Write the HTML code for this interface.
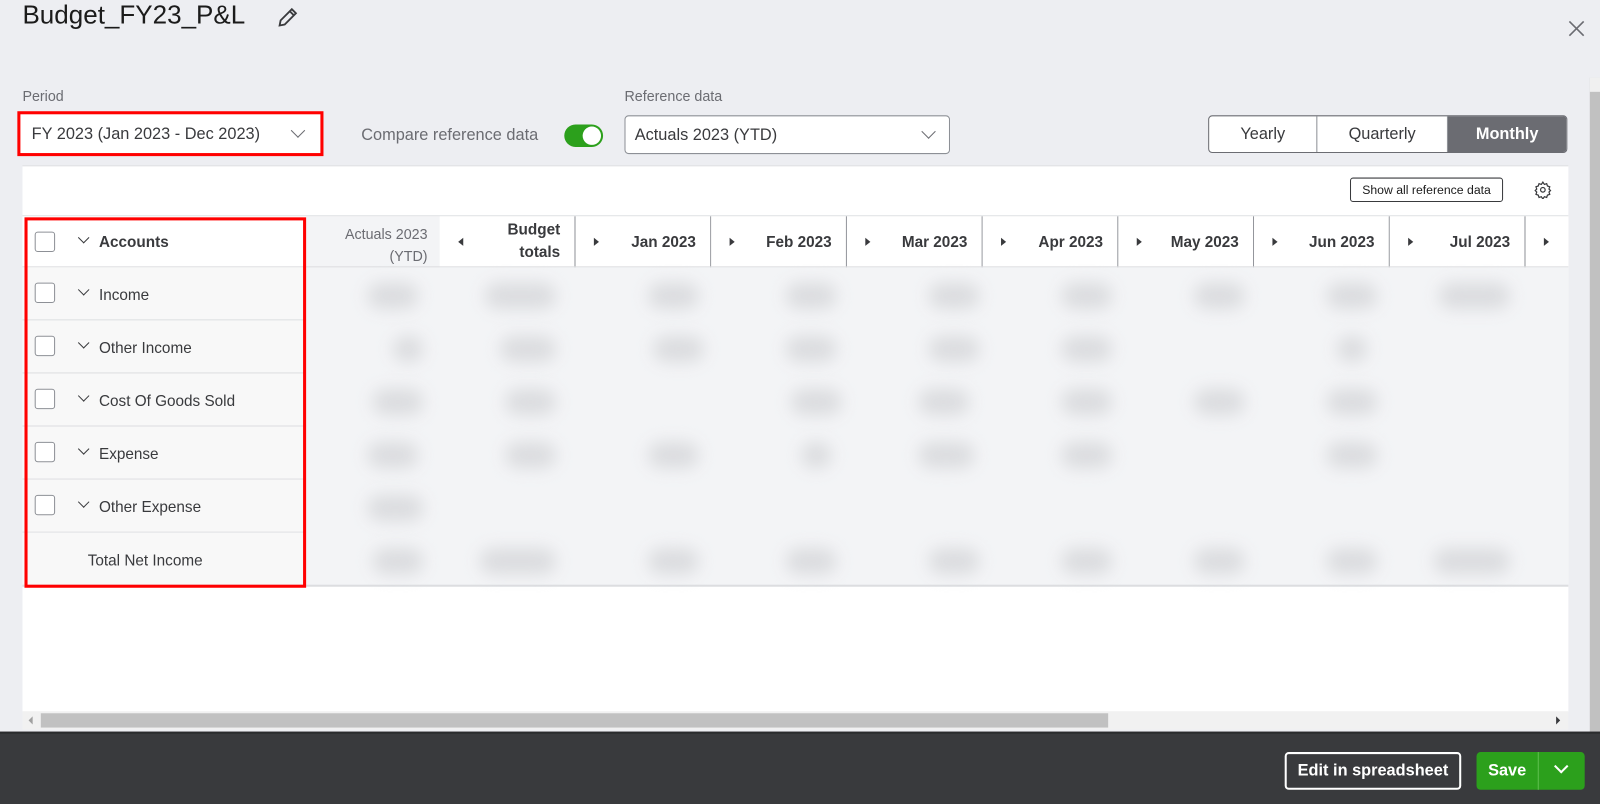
<!DOCTYPE html>
<html><head><meta charset="utf-8"><style>
*{box-sizing:border-box;margin:0;padding:0}
html,body{width:1600px;height:804px;overflow:hidden;background:#edeef2;font-family:"Liberation Sans",sans-serif;color:#393a3d}
#w{position:absolute;left:0;top:0;width:1568px;height:788px;transform:scale(1.020408);transform-origin:0 0;background:#edeef2}
.a{position:absolute}
.t{white-space:nowrap}
.hd{position:absolute;top:212px;height:50px;font-size:15px;font-weight:bold;color:#393a3d;display:flex;align-items:center;justify-content:flex-end;padding-right:14px;border-right:1px solid #8d9096;background:#fff}
.tri{position:absolute;left:18px;top:21px;width:0;height:0;border-top:4px solid transparent;border-bottom:4px solid transparent;border-left:5px solid #393a3d}
.row{position:absolute;left:22px;width:278px;height:52px;background:#f8f8f8;border-bottom:1px solid #dcdde0;font-size:15px;color:#393a3d}
.cb{position:absolute;left:12px;top:15px;width:20px;height:20px;border:1px solid #8d9096;border-radius:3px;background:#fff}
.chev{position:absolute;left:56px;top:18px;width:8px;height:8px;border-right:1.5px solid #393a3d;border-bottom:1.5px solid #393a3d;transform:rotate(45deg)}
.lbl{position:absolute;left:75px;top:19px}
.b{position:absolute;width:50px;height:26px;margin-top:-5px;border-radius:13px;background:#d9dadd;filter:blur(8px);opacity:.9}
</style></head><body><div id="w">
<div class="a t" style="left:22px;top:1px;font-size:25.5px;color:#1b1b1b">Budget_FY23_P&amp;L</div>
<svg class="a" style="left:270px;top:5px" width="24" height="24" viewBox="0 0 24 24" fill="none" stroke="#393a3d" stroke-width="1.8"><path d="M4 20l1-5L16 4l4 4L9 19z M14 6l4 4"/></svg>
<svg class="a" style="left:1536px;top:19px" width="18" height="18" viewBox="0 0 18 18" stroke="#6b6c72" stroke-width="1.6"><path d="M2 2L16 16M16 2L2 16"/></svg>
<div class="a" style="left:1558px;top:76px;width:10px;height:642px;background:#c1c1c1"></div>
<div class="a" style="left:1558px;top:76px;width:10px;height:14px;background:#f0f0f0"></div>

<div class="a t" style="left:22px;top:86px;font-size:14px;color:#6b6c72">Period</div>
<div class="a" style="left:17px;top:109px;width:300px;height:44px;border:3px solid #f00;background:#fff"></div>
<div class="a t" style="left:31px;top:123px;font-size:16px;color:#393a3d">FY 2023 (Jan 2023 - Dec 2023)</div>
<div class="a" style="left:287px;top:123px;width:10px;height:10px;border-right:1.6px solid #6b6c72;border-bottom:1.6px solid #6b6c72;transform:rotate(45deg)"></div>
<div class="a t" style="left:354px;top:124px;font-size:16px;color:#6b6c72">Compare reference data</div>
<div class="a" style="left:553px;top:122px;width:38px;height:22px;border-radius:11px;background:#2ca01c"></div>
<div class="a" style="left:571px;top:124px;width:18px;height:18px;border-radius:9px;background:#fff"></div>
<div class="a t" style="left:612px;top:86px;font-size:14px;color:#6b6c72">Reference data</div>
<div class="a" style="left:612px;top:113px;width:319px;height:38px;border:1px solid #8d9096;border-radius:4px;background:#fff"></div>
<div class="a t" style="left:622px;top:124px;font-size:16px">Actuals 2023 (YTD)</div>
<div class="a" style="left:905px;top:124px;width:10px;height:10px;border-right:1.6px solid #6b6c72;border-bottom:1.6px solid #6b6c72;transform:rotate(45deg)"></div>

<div class="a" style="left:1184px;top:113px;width:352px;height:37px;border:1px solid #6b6c72;border-radius:4px;background:#fff;overflow:hidden;display:flex;font-size:16px">
<div style="width:106px;border-right:1px solid #8d9096;display:flex;align-items:center;justify-content:center;color:#393a3d">Yearly</div>
<div style="width:128px;border-right:1px solid #8d9096;display:flex;align-items:center;justify-content:center;color:#393a3d">Quarterly</div>
<div style="flex:1;background:#6b6c72;color:#fff;font-weight:bold;display:flex;align-items:center;justify-content:center">Monthly</div></div>

<div class="a" style="left:22px;top:162px;width:1515px;height:536px;background:#fff;border-top:1px solid #dcdde0"></div>
<div class="a t" style="left:1323px;top:174px;width:150px;height:24px;border:1px solid #393a3d;border-radius:3px;font-size:12px;display:flex;align-items:center;justify-content:center;color:#1b1b1b">Show all reference data</div>
<svg class="a" style="left:1503px;top:177px" width="18" height="18" viewBox="0 0 24 24" fill="none" stroke="#393a3d" stroke-width="1.6"><circle cx="12" cy="12" r="3"/><path d="M12 2l2 3 3-1 1 3 3 1-1 3 2 2-2 2 1 3-3 1-1 3-3-1-2 3-2-3-3 1-1-3-3-1 1-3-2-2 2-2-1-3 3-1 1-3 3 1z"/></svg>

<div class="a" style="left:22px;top:211px;width:1515px;height:1px;background:#dcdde0"></div>
<div class="a" style="left:300px;top:262px;width:1237px;height:312px;background:#f3f4f6"></div>
<div class="a" style="left:22px;top:573px;width:1515px;height:2px;background:#dcdde0"></div>
<div class="a" style="left:300px;top:212px;width:131px;height:50px;background:#f3f4f6;color:#6b6c72;font-size:14px;text-align:right;padding:6px 12px 0 0;line-height:22px">Actuals 2023<br>(YTD)</div>
<div class="hd" style="left:431px;width:133px;line-height:22px;text-align:right"><span class="tri" style="border-left:none;border-right:5px solid #393a3d"></span>Budget<br>totals</div>
<div class="hd" style="left:564px;width:133px"><span class="tri"></span>Jan 2023</div>
<div class="hd" style="left:697px;width:133px"><span class="tri"></span>Feb 2023</div>
<div class="hd" style="left:830px;width:133px"><span class="tri"></span>Mar 2023</div>
<div class="hd" style="left:963px;width:133px"><span class="tri"></span>Apr 2023</div>
<div class="hd" style="left:1096px;width:133px"><span class="tri"></span>May 2023</div>
<div class="hd" style="left:1229px;width:133px"><span class="tri"></span>Jun 2023</div>
<div class="hd" style="left:1362px;width:133px"><span class="tri"></span>Jul 2023</div>
<div class="hd" style="left:1495px;width:42px;border-right:none"><span class="tri"></span></div>
<div class="a" style="left:22px;top:261px;width:1515px;height:1px;background:#dcdde0"></div>

<div class="row" style="top:212px;background:#fff;height:50px"><div class="cb"></div><div class="chev" style="top:17px"></div><div class="lbl" style="font-weight:bold;top:17px">Accounts</div></div>
<div class="row" style="top:262px"><div class="cb"></div><div class="chev"></div><div class="lbl">Income</div></div>
<div class="row" style="top:314px"><div class="cb"></div><div class="chev"></div><div class="lbl">Other Income</div></div>
<div class="row" style="top:366px"><div class="cb"></div><div class="chev"></div><div class="lbl">Cost Of Goods Sold</div></div>
<div class="row" style="top:418px"><div class="cb"></div><div class="chev"></div><div class="lbl">Expense</div></div>
<div class="row" style="top:470px"><div class="cb"></div><div class="chev"></div><div class="lbl">Other Expense</div></div>
<div class="row" style="top:522px"><div class="lbl" style="left:64px">Total Net Income</div></div>
<div class="a" style="left:24px;top:213px;width:276px;height:363px;border:3px solid #f00"></div>

<div class="b" style="left:360px;top:282px"></div><div class="b" style="left:475px;top:282px;width:70px"></div><div class="b" style="left:635px;top:282px"></div><div class="b" style="left:770px;top:282px"></div><div class="b" style="left:910px;top:282px"></div><div class="b" style="left:1040px;top:282px"></div><div class="b" style="left:1170px;top:282px"></div><div class="b" style="left:1300px;top:282px"></div><div class="b" style="left:1410px;top:282px;width:70px"></div>
<div class="b" style="left:385px;top:334px;width:30px"></div><div class="b" style="left:490px;top:334px;width:55px"></div><div class="b" style="left:640px;top:334px"></div><div class="b" style="left:770px;top:334px"></div><div class="b" style="left:910px;top:334px"></div><div class="b" style="left:1040px;top:334px"></div><div class="b" style="left:1310px;top:334px;width:30px"></div>
<div class="b" style="left:365px;top:386px"></div><div class="b" style="left:495px;top:386px"></div><div class="b" style="left:775px;top:386px"></div><div class="b" style="left:900px;top:386px"></div><div class="b" style="left:1040px;top:386px"></div><div class="b" style="left:1170px;top:386px"></div><div class="b" style="left:1300px;top:386px"></div>
<div class="b" style="left:360px;top:438px"></div><div class="b" style="left:495px;top:438px"></div><div class="b" style="left:635px;top:438px"></div><div class="b" style="left:785px;top:438px;width:30px"></div><div class="b" style="left:900px;top:438px;width:55px"></div><div class="b" style="left:1040px;top:438px"></div><div class="b" style="left:1300px;top:438px"></div>
<div class="b" style="left:360px;top:490px;width:55px"></div>
<div class="b" style="left:365px;top:542px"></div><div class="b" style="left:470px;top:542px;width:75px"></div><div class="b" style="left:635px;top:542px"></div><div class="b" style="left:770px;top:542px"></div><div class="b" style="left:910px;top:542px"></div><div class="b" style="left:1040px;top:542px"></div><div class="b" style="left:1170px;top:542px"></div><div class="b" style="left:1300px;top:542px"></div><div class="b" style="left:1405px;top:542px;width:75px"></div>

<div class="a" style="left:22px;top:697px;width:1515px;height:18px;background:#f1f1f1"></div>
<div class="a" style="left:40px;top:699px;width:1046px;height:14px;background:#c1c1c1"></div>
<div class="a" style="left:28px;top:702px;border-top:4px solid transparent;border-bottom:4px solid transparent;border-right:4px solid #a0a0a0"></div>
<div class="a" style="left:1525px;top:702px;border-top:4px solid transparent;border-bottom:4px solid transparent;border-left:4px solid #393a3d"></div>

<div class="a" style="left:0;top:717px;width:1568px;height:71px;background:#393a3d;border-top:2px solid #2a2b2d"></div>
<div class="a t" style="left:1259px;top:737px;width:173px;height:37px;border:2px solid #fff;border-radius:4px;color:#fff;font-weight:bold;font-size:16px;display:flex;align-items:center;justify-content:center">Edit in spreadsheet</div>
<div class="a" style="left:1447px;top:737px;width:106px;height:37px;background:#2ca01c;border-radius:4px"></div>
<div class="a t" style="left:1447px;top:737px;width:61px;height:37px;color:#fff;font-weight:bold;font-size:16px;display:flex;align-items:center;justify-content:center;border-right:1px solid #5fc04f">Save</div>
<div class="a" style="left:1525px;top:746px;width:10px;height:10px;border-right:2px solid #fff;border-bottom:2px solid #fff;transform:rotate(45deg)"></div>
</div></body></html>
